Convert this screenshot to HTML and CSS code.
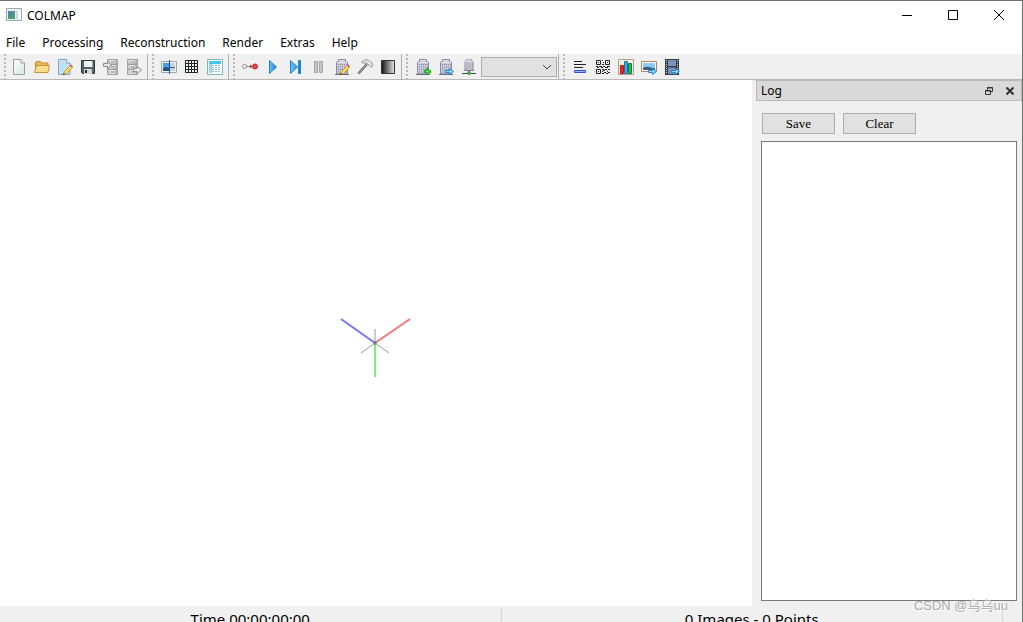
FILE: index.html
```html
<!DOCTYPE html>
<html lang="en">
<head>
    <meta charset="UTF-8">
    <meta name="viewport" content="width=device-width, initial-scale=1.0">
    <title>COLMAP</title>
    <link rel="stylesheet" href="styles.css">
</head>
<body>
    <!-- shared icon parts -->
    <svg class="defs" width="0" height="0">
        <defs>
            <linearGradient id="blue" x1="0" y1="0" x2="1" y2="0">
                <stop offset="0" stop-color="#6cc8f8"/><stop offset="1" stop-color="#1c74c8"/>
            </linearGradient>
            <linearGradient id="fade" x1="0" y1="0" x2="1" y2="0">
                <stop offset="0" stop-color="#111"/><stop offset="1" stop-color="#e8e8e8"/>
            </linearGradient>
            <linearGradient id="paper" x1="0" y1="0" x2="1" y2="1">
                <stop offset="0" stop-color="#fff"/><stop offset="1" stop-color="#d3e4e0"/>
            </linearGradient>
            <linearGradient id="metal" x1="0" y1="0" x2="1" y2="0">
                <stop offset="0" stop-color="#c4c4c4"/><stop offset=".5" stop-color="#f2f2f2"/><stop offset="1" stop-color="#a2a2aa"/>
            </linearGradient>
            <symbol id="building" viewBox="0 0 16 16">
                <path d="M4.500 3V.500h7V3h2v12h-11V3z" fill="#c8c8d6" stroke="#8a8a9c"/>
                <path d="M4 5.500h9M4 8h9M4 10.500h9M4 13h9" stroke="#8585a0" stroke-dasharray="1 1"/>
                <path d="M5 1.500h6M3 3.500h10" stroke="#e6e6f0"/>
                <path d="M1 15.500h14" stroke="#66667a"/>
            </symbol>
            <symbol id="pencil" viewBox="0 0 16 16">
                <path d="M6.500 15.500l1-3 6-6 2 2-6 6z" fill="#ffdc50" stroke="#b58424" stroke-width=".7"/>
                <path d="M13 6.500l1-1 2 2-1 1z" fill="#d8443c"/>
                <path d="M6 16l.6-2 1.400 1.400z" fill="#222"/>
            </symbol>
            <symbol id="arrow" viewBox="0 0 16 16">
                <path d="M7.500 11.500h4v-2l4 3-4 3v-2h-4z" fill="#8ed4ff" stroke="#2b85d0"/>
            </symbol>
            <symbol id="drawers" viewBox="0 0 16 16">
                <path d="M3.500.500h10v4.500h-10zM3.500 5.500h10V10h-10zM3.500 10.500h10v5h-10z" fill="url(#metal)" stroke="#a0a0a0"/>
                <path d="M7 3h3M7 8h3M7 13h3" stroke="#777"/>
            </symbol>
        </defs>
    </svg>

    <div class="window">
        <header class="titlebar">
            <svg class="app-icon" width="16" height="14" viewBox="0 0 16 14">
                <path d="M.500.500h15v12h-15z" fill="#e9f1f3" stroke="#9ca7ae"/>
                <path d="M2 3h7v8H2z" fill="#4a9a85"/><path d="M2 3h4v4H2z" fill="#4f86ac"/>
                <path d="M10 3h2v8h-2z" fill="#cfdade"/><path d="M12.500 3H15v8h-2.500z" fill="#fff"/>
            </svg>
            <span class="title">COLMAP</span>
            <button class="win-button" aria-label="Minimize"><svg width="12" height="12" viewBox="0 0 12 12"><path d="M1 6.500h10"/></svg></button>
            <button class="win-button" aria-label="Maximize"><svg width="12" height="12" viewBox="0 0 12 12"><path d="M1.500 1.500h9v9h-9z"/></svg></button>
            <button class="win-button" aria-label="Close"><svg width="12" height="12" viewBox="0 0 12 12"><path d="M1 1l10 10M11 1L1 11"/></svg></button>
        </header>

        <nav class="menubar">
            <button>File</button>
            <button>Processing</button>
            <button>Reconstruction</button>
            <button>Render</button>
            <button>Extras</button>
            <button>Help</button>
        </nav>

        <div class="toolbar">
            <div class="tool-group">
                <button aria-label="New project"><svg viewBox="0 0 16 16"><path d="M2.500.500h7.500l3.500 3.500v11.500h-11z" fill="url(#paper)" stroke="#8ea19d"/><path d="M10 .500V4h3.500" fill="#fff" stroke="#8ea19d"/></svg></button>
                <button aria-label="Open project"><svg viewBox="0 0 16 16"><path d="M1.500 13.500v-10l1-1h4l1.500 1.500h6v3" fill="#e8b950" stroke="#bd8b32"/><path d="M.500 13.500l2-7h13l-1.500 7z" fill="#fbdc8d" stroke="#c4943b"/></svg></button>
                <button aria-label="Edit project"><svg viewBox="0 0 16 16"><path d="M1.500.500h8l3.500 3.500v11.500H1.500z" fill="#c2e0f4" stroke="#84a5bd"/><path d="M9.500.500V4H13" fill="#fff" stroke="#84a5bd"/><use href="#pencil"/></svg></button>
                <button aria-label="Save project"><svg viewBox="0 0 16 16"><path d="M1.500 1.500h13v13h-12l-1-1z" fill="#596066" stroke="#33383c"/><path d="M4 2h8.500v6H4z" fill="#e9f4f0"/><path d="M4 10h8v5H4z" fill="#d4d7d9"/><path d="M5 11h2v3H5z" fill="#222"/></svg></button>
                <button aria-label="Import model"><svg viewBox="0 0 16 16"><use href="#drawers" x="1" width="16" height="16"/><path d="M.500 4.500h4v-2L8.500 6l-4 3.500v-2h-4z" fill="#e4e4e4" stroke="#888"/></svg></button>
                <button aria-label="Export model"><svg viewBox="0 0 16 16"><use href="#drawers" x="-2" width="16" height="16"/><path d="M7.500 9.500h3.500v-2l4.500 3.500-4.500 3.500v-2H7.500z" fill="#e6ede2" stroke="#8a9686"/></svg></button>
            </div>
            <div class="tool-group">
                <button aria-label="Feature extraction"><svg viewBox="0 0 16 16"><path d="M.500 2.500h15v11H.500z" fill="#f4f6f6" stroke="#9aa7ac"/><path d="M2 4h6v8H2z" fill="#459ddc"/><path d="M2 9l3-1 3 1v3H2z" fill="#20566d"/><path d="M9 4h5v8H9z" fill="#c5d3dc"/><path d="M9 8.500h5" stroke="#445e6c"/><path d="M8.500 1v14" stroke="#1e40e6"/></svg></button>
                <button aria-label="Feature matching"><svg viewBox="0 0 16 16"><path d="M1.500 1.500h12v12h-12zM4.500 1v13M7.500 1v13M10.500 1v13M1 4.500h13M1 7.500h13M1 10.500h13" fill="none" stroke="#222"/></svg></button>
                <button aria-label="Database management"><svg viewBox="0 0 16 16"><path d="M.500.500h15v15H.500z" fill="#fff" stroke="#80b6bf"/><path d="M2 2h12v3H2z" fill="#44c7ef"/><path d="M2 5h3v9H2z" fill="#95dcef"/><path d="M5 6.500h9M5 8.500h9M5 10.500h9M5 12.500h9" stroke="#8fbac4" stroke-dasharray="2 1"/></svg></button>
            </div>
            <div class="tool-group">
                <button aria-label="Automatic reconstruction"><svg viewBox="0 0 16 16"><circle cx="2.500" cy="7.500" r="2" fill="#fff" stroke="#888"/><path d="M4.500 7.500H8" stroke="#888"/><path d="M8 5.500l2.500 2L8 9.500z" fill="#b33"/><circle cx="13" cy="7.500" r="2.500" fill="#e34545" stroke="#b82c2c"/></svg></button>
                <button aria-label="Start reconstruction"><svg viewBox="0 0 16 16"><path d="M4.500 1.500l7 6.500-7 6.500z" fill="url(#blue)" stroke="#2784c9"/></svg></button>
                <button aria-label="Step reconstruction"><svg viewBox="0 0 16 16"><path d="M2.500 1.500l7 6.500-7 6.500zM10.500 1.500h2v13h-2z" fill="url(#blue)" stroke="#2784c9"/></svg></button>
                <button aria-label="Pause reconstruction" disabled><svg viewBox="0 0 16 16"><path d="M3.500 2.500h3v11h-3zM8.500 2.500h3v11h-3z" fill="#c4c4c4" stroke="#a6a6a6"/></svg></button>
                <button aria-label="Reconstruction options"><svg viewBox="0 0 16 16"><use href="#building"/><use href="#pencil"/></svg></button>
                <button aria-label="Bundle adjustment"><svg viewBox="0 0 16 16"><path d="M10 5L1.500 14.500" stroke="#666" stroke-width="2.500"/><path d="M10 5L2 14" stroke="#aaa"/><path d="M5 2.500Q9-.500 12 1.500l1.500 1.500 1.500.500.500 4-1.500 1-2-2.500-2.500-2L5 4z" fill="#e6e6e6" stroke="#888" stroke-width=".8"/></svg></button>
                <button aria-label="Dense reconstruction"><svg viewBox="0 0 16 16"><path d="M1.500 1.500h13v13h-13z" fill="url(#fade)" stroke="#333"/></svg></button>
            </div>
            <div class="tool-group model-group">
                <button aria-label="Add model"><svg viewBox="0 0 16 16"><use href="#building"/><path d="M9.500 11.500h2v-2h2v2h2v2h-2v2h-2v-2h-2z" fill="#55e254" stroke="#149a1c"/></svg></button>
                <button aria-label="Next model"><svg viewBox="0 0 16 16"><use href="#building"/><use href="#arrow"/></svg></button>
                <button aria-label="Render now"><svg viewBox="0 0 16 16"><use href="#building" x="2" width="12" height="12"/><path d="M1 14.500h14M8 12v2" stroke="#444"/><circle cx="8" cy="14" r="1.500" fill="#45d442" stroke="#167d1b" stroke-width=".7"/></svg></button>
                <select class="model-select" aria-label="Model"><option></option></select>
            </div>
            <div class="tool-group">
                <button aria-label="Show log"><svg viewBox="0 0 16 16"><path d="M2 2.500h8M2 5.500h12M2 8.500h9" stroke="#222"/><path d="M2.500 11.500h11v2h-11z" fill="#9ab6ff" stroke="#2b4ed5"/></svg></button>
                <button aria-label="Match matrix"><svg viewBox="0 0 16 16"><path d="M1.500 1.500h4v4h-4zM10.500 1.500h4v4h-4zM1.500 10.500h4v4h-4z" fill="none" stroke="#222"/><path d="M3 3.500h1M12 3.500h1M3 12.500h1M7 1.500h1M8 3.500h1M7 5.500h2M1 7.500h2M4 7.500h3M8 7.500h2M12 7.500h3M2 8.500h2M6 8.500h2M10 8.500h3M7 10.500h2M10 10.500h2M13 10.500h2M8 11.500h2M12 12.500h1M7 12.500h1M9 13.500h2M13 13.500h2M7 14.500h2M11 14.500h2" stroke="#222"/></svg></button>
                <button aria-label="Statistics"><svg viewBox="0 0 16 16"><path d="M.500.500h15v15H.500z" fill="#f4efdc" stroke="#aaa18a"/><path d="M2.500 6.500h3v8h-3z" fill="#ed2828" stroke="#b81616"/><path d="M6.500 2.500h3v12h-3z" fill="#36aee0" stroke="#167aa6"/><path d="M10.500 4.500h3v10h-3z" fill="#2eb665" stroke="#147c3f"/></svg></button>
                <button aria-label="Grab image"><svg viewBox="0 0 16 16"><path d="M.500 2.500h15v10H.500z" fill="#fff" stroke="#b08560"/><path d="M2 4h12v7H2z" fill="#8ccbf2"/><path d="M2 9q3-2 6-1t6 1v2H2z" fill="#35617a"/><use href="#arrow"/></svg></button>
                <button aria-label="Grab movie"><svg viewBox="0 0 16 16"><path d="M1 0h14v16H1z" fill="#343b43"/><path d="M4 1h8v6H4zM4 8.500h8V15H4z" fill="#7895b9"/><path d="M2.500 1v14M13.500 1v14" stroke="#c7ccd1" stroke-dasharray="1 1"/><use href="#arrow"/></svg></button>
            </div>
        </div>

        <main class="workspace">
            <section class="viewer">
                <svg width="72" height="72" viewBox="-35 -36 72 72" fill="none">
                    <path d="M0 0V-14M0 0L-14 10M0 0L14 10" stroke="#999"/>
                    <path d="M0 0L-34-24" stroke="#7777f2" stroke-width="2"/>
                    <path d="M0 0L35-24" stroke="#f27777" stroke-width="2"/>
                    <path d="M0 0V34" stroke="#77f277" stroke-width="2"/>
                    <path d="M-2 0H2M0-2V2" stroke="#666"/>
                </svg>
            </section>
            <aside class="dock">
                <div class="dock-title">
                    <label for="log">Log</label>
                    <button aria-label="Float"><svg width="10" height="10" viewBox="0 0 10 10"><path d="M3.500 4V1.500h5v4H6.500M1.500 4.500h5v4h-5zM3 2h6M1 5h6"/></svg></button>
                    <button aria-label="Close log"><svg width="10" height="10" viewBox="0 0 10 10"><path d="M1.500 1.500l7 7M8.500 1.500l-7 7" stroke-width="2"/></svg></button>
                </div>
                <div class="dock-body">
                    <div class="dock-actions">
                        <button>Save</button>
                        <button>Clear</button>
                    </div>
                    <textarea id="log" readonly></textarea>
                </div>
            </aside>
        </main>

        <footer class="statusbar">
            <div class="status">Time 00:00:00:00</div>
            <div class="status">0 Images - 0 Points</div>
            <div class="size-grip"></div>
        </footer>
    </div>
    <div class="watermark">CSDN @乌乌uu</div>
</body>
</html>
```
FILE: styles.css
```css
* {
    box-sizing: border-box;
}
body {
    margin: 0;
    height: 100vh;
    overflow: hidden;
    font-family: "Noto Sans", "Open Sans", sans-serif;
    font-size: 12px;
    color: #000;
}
button {
    padding: 0;
    border: none;
    background: none;
    font: inherit;
    color: inherit;
}
.defs {
    position: absolute;
}
/* the status bar runs past the bottom edge */
.window {
    display: flex;
    flex-direction: column;
    height: calc(100vh + 10px);
    background: #f0f0f0;
    border-top: 1px solid #707070;
    border-right: 1px solid #707070;
}

/* title bar */
.titlebar {
    display: flex;
    align-items: center;
    height: 28px;
    padding-left: 6px;
    background: #fff;
}
.title {
    flex: 1;
    margin-left: 5px;
}
.win-button {
    display: flex;
    align-items: center;
    justify-content: center;
    width: 46px;
    height: 28px;
}
.win-button svg {
    fill: none;
    stroke: #000;
}

/* menu */
.menubar {
    display: flex;
    gap: 17px;
    height: 25px;
    padding: 2px 0 0 6px;
    background: #fff;
}

/* toolbar */
.toolbar {
    display: flex;
    height: 26px;
    border-bottom: 1px solid #b8b8b8;
}
.tool-group {
    display: flex;
    align-items: center;
    padding: 0 2px 0 9px;
    border-right: 1px solid #b0b0b0;
    background: radial-gradient(circle, #bbb 1px, transparent 1px) 3px 3px / 4px 4px repeat-y;
}
.tool-group:first-child {
    padding: 0 2px 0 7px;
}
.tool-group:last-child {
    border-right: none;
}
.tool-group.model-group {
    padding-right: 1px;
}
.tool-group button {
    display: flex;
    justify-content: center;
    width: 23px;
}
.tool-group button svg {
    width: 16px;
    height: 16px;
}
.model-select {
    width: 76px;
    height: 20px;
    margin-left: 1px;
    border: 1px solid #adadad;
    border-radius: 0;
    appearance: none;
    background: #e1e1e1 url("data:image/svg+xml,%3Csvg xmlns='http://www.w3.org/2000/svg' width='10' height='6'%3E%3Cpath d='M1 1l4 4 4-4' fill='none' stroke='%23444'/%3E%3C/svg%3E") no-repeat right 4px center;
}

/* workspace */
.workspace {
    display: flex;
    flex: 1;
    min-height: 0;
}
.viewer {
    display: flex;
    flex: 1;
    align-items: center;
    justify-content: center;
    background: #fff;
}
.dock {
    display: flex;
    flex-direction: column;
    width: 270px;
    padding-left: 4px;
}
.dock-title {
    display: flex;
    align-items: center;
    gap: 11px;
    height: 21px;
    padding: 0 6px 0 4px;
    border: 1px solid #b8b8b8;
    background: #d9d9d9;
}
.dock-title label {
    flex: 1;
}
.dock-title button {
    display: flex;
}
.dock-title svg {
    fill: none;
    stroke: #333;
}
.dock-body {
    display: flex;
    flex: 1;
    flex-direction: column;
    gap: 7px;
    padding: 12px 5px 5px 5px;
}
.dock-actions {
    display: flex;
    gap: 8px;
    padding-left: 1px;
}
.dock-actions button {
    width: 73px;
    height: 21px;
    border: 1px solid #adadad;
    background: #e1e1e1;
    font-family: "Liberation Serif", serif;
    font-size: 13px;
}
#log {
    flex: 1;
    resize: none;
    border: 1px solid #7a7a7a;
    background: #fff;
}

/* status bar */
.statusbar {
    display: flex;
    height: 26px;
    padding-top: 2px;
    font-size: 15px;
    line-height: 22px;
}
.status {
    flex: 1;
    border-right: 1px solid #d7d7d7;
    text-align: center;
}
.size-grip {
    width: 19px;
}

.watermark {
    position: absolute;
    right: 15px;
    bottom: 7px;
    font-family: "Liberation Sans", "Noto Sans CJK SC", sans-serif;
    font-size: 13px;
    line-height: 18px;
    color: #aaa;
    text-shadow: 1px 1px 0 #fff;
}
```
